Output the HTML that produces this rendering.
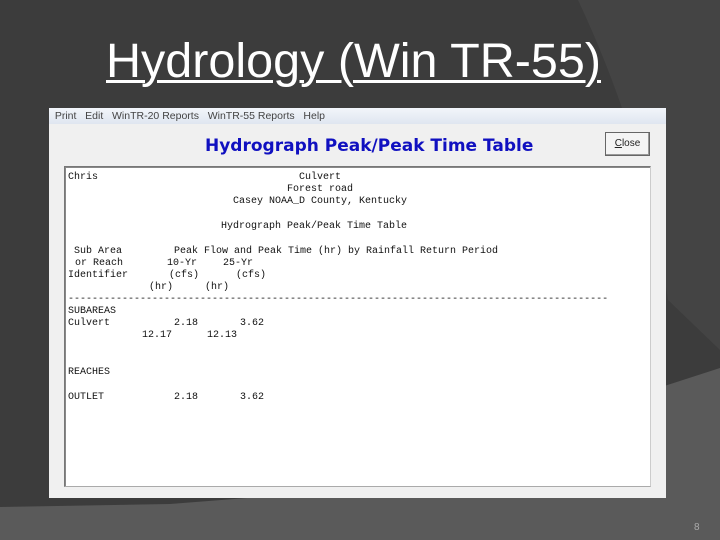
<!DOCTYPE html>
<html><head><style>
body{margin:0;width:720px;height:540px;overflow:hidden;background:#3c3c3c;position:relative;font-family:"Liberation Sans",Arial,sans-serif}
.a{position:absolute;white-space:pre}
.m{font-family:"Liberation Mono","Courier New",monospace;font-size:10px;color:#111;line-height:12px}
</style></head><body>
<svg class="a" style="left:0;top:0" width="720" height="540">
<path d="M578,0 C620,90 650,180 668,300 L720,350 L720,0 Z" fill="#444"/>
<path d="M0,507 L170,504 L260,497 C400,470 560,420 720,368 L720,540 L0,540 Z" fill="#5a5a5a"/>
</svg>
<div class="a" style="left:106px;top:33px;font-size:48.5px;color:#fff;font-family:'Liberation Sans',Arial,sans-serif;text-decoration:underline;text-decoration-thickness:3px;text-underline-offset:3px">Hydrology (Win TR-55)</div>
<div class="a" style="left:49px;top:108px;width:617px;height:390px;background:#f0f0f0"></div>
<div class="a" style="left:49px;top:108px;width:617px;height:16px;background:linear-gradient(#f2f5fa,#dfe6f0);font-size:10.5px;color:#444;line-height:16px">  Print   Edit   WinTR-20 Reports   WinTR-55 Reports   Help</div>
<div class="a" style="left:205px;top:136px;font-size:17px;font-weight:bold;color:#1010c0;font-family:'DejaVu Sans',sans-serif">Hydrograph Peak/Peak Time Table</div>
<div class="a" style="left:605px;top:132px;width:43px;height:22px;border:1px solid #666;background:#f4f4f4;box-shadow:inset -1px -1px #999;font-size:10px;text-align:center;line-height:22px;color:#222"><u>C</u>lose</div>
<div class="a" style="left:64px;top:166px;width:585px;height:319px;border:1px solid #777;border-right-color:#ccc;border-bottom-color:#aaa;background:#fff;box-shadow:inset 1px 1px #888"></div>
<div style="position:absolute;left:0;top:1px">
<div class="a m" style="left:68px;top:171px">Chris</div>
<div class="a m" style="left:299px;top:171px">Culvert</div>
<div class="a m" style="left:287px;top:183px">Forest road</div>
<div class="a m" style="left:233px;top:195px">Casey NOAA_D County, Kentucky</div>
<div class="a m" style="left:221px;top:220px">Hydrograph Peak/Peak Time Table</div>
<div class="a m" style="left:74px;top:245px">Sub Area</div>
<div class="a m" style="left:174px;top:245px">Peak Flow and Peak Time (hr) by Rainfall Return Period</div>
<div class="a m" style="left:75px;top:257px">or Reach</div>
<div class="a m" style="left:167px;top:257px">10-Yr</div>
<div class="a m" style="left:223px;top:257px">25-Yr</div>
<div class="a m" style="left:68px;top:269px">Identifier</div>
<div class="a m" style="left:169px;top:269px">(cfs)</div>
<div class="a m" style="left:236px;top:269px">(cfs)</div>
<div class="a m" style="left:149px;top:281px">(hr)</div>
<div class="a m" style="left:205px;top:281px">(hr)</div>
<div class="a m" style="left:68px;top:293px">------------------------------------------------------------------------------------------</div>
<div class="a m" style="left:68px;top:305px">SUBAREAS</div>
<div class="a m" style="left:68px;top:317px">Culvert</div>
<div class="a m" style="left:174px;top:317px">2.18</div>
<div class="a m" style="left:240px;top:317px">3.62</div>
<div class="a m" style="left:142px;top:329px">12.17</div>
<div class="a m" style="left:207px;top:329px">12.13</div>
<div class="a m" style="left:68px;top:366px">REACHES</div>
<div class="a m" style="left:68px;top:391px">OUTLET</div>
<div class="a m" style="left:174px;top:391px">2.18</div>
<div class="a m" style="left:240px;top:391px">3.62</div>
</div>
<div class="a" style="left:694px;top:522px;font-size:10px;color:#aaa">8</div>
</body></html>
